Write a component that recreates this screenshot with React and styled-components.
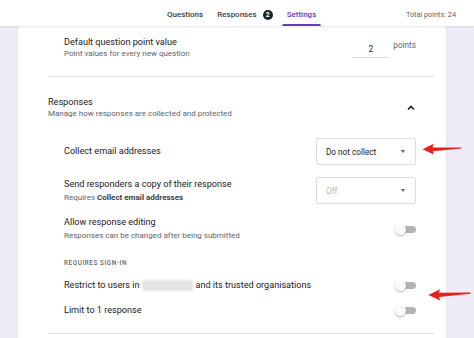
import React from "react";
import styled, { createGlobalStyle } from "styled-components";

const Global = createGlobalStyle`
  html, body { margin: 0; padding: 0; background: #f0ebf8; }
  body { font-family: Roboto, "Noto Sans", Arial, sans-serif; color: #202124; overflow: hidden; }
  * { box-sizing: border-box; }
`;

const Page = styled.div`
  position: relative;
  width: 474px;
  height: 338px;
  overflow: hidden;
  background: #f0ebf8;
`;

const Header = styled.header`
  position: relative;
  z-index: 2;
  height: 26px;
  background: #fff;
  display: flex;
  align-items: stretch;
  padding-left: 162px;
  padding-right: 18px;
  box-shadow: 0 1px 2px rgba(60, 64, 67, 0.12);
`;

const Tabs = styled.nav`
  display: flex;
  gap: 4px;
`;

const Tab = styled.div`
  position: relative;
  display: flex;
  align-items: center;
  gap: 6px;
  padding: 3px 5px 0;
  font-size: 8px;
  font-weight: 500;
  color: ${(p) => (p.$active ? "#673ab7" : "#3c4043")};
  &::after {
    content: "";
    position: absolute;
    left: 0;
    right: 0;
    bottom: 0;
    height: 2px;
    border-radius: 2px 2px 0 0;
    background: ${(p) => (p.$active ? "#673ab7" : "transparent")};
  }
`;

const Badge = styled.span`
  display: inline-flex;
  align-items: center;
  justify-content: center;
  width: 10px;
  height: 10px;
  border-radius: 50%;
  background: #202124;
  color: #fff;
  font-size: 7px;
  font-weight: 700;
`;

const Total = styled.div`
  margin-left: auto;
  display: flex;
  align-items: center;
  padding-top: 3px;
  font-size: 7.3px;
  color: #5f6368;
`;

const Main = styled.main`
  padding: 0 28px 0 18px;
`;

const Card = styled.section`
  background: #fff;
  padding: 0 12px 0 30px;
  height: 312px;
  box-shadow: 0 0 1px rgba(60, 64, 67, 0.18);
`;

const Divider = styled.hr`
  border: 0;
  height: 1px;
  background: #e0e0e0;
  margin: ${(p) => p.$mt || 0}px 0 0;
`;

const Row = styled.div`
  display: flex;
  align-items: center;
  justify-content: space-between;
  padding: 0 18px 0 ${(p) => (p.$indent ? 16 : 0)}px;
  margin-top: ${(p) => p.$mt || 0}px;
  height: ${(p) => (p.$h ? `${p.$h}px` : "auto")};
`;

const TextBlock = styled.div`
  display: flex;
  flex-direction: column;
`;

const Title = styled.div`
  font-size: ${(p) => p.$size || 9.1}px;
  line-height: ${(p) => p.$lh || 13}px;
  color: #202124;
  white-space: nowrap;
  display: flex;
  align-items: center;
`;

const Sub = styled.div`
  font-size: 8px;
  line-height: ${(p) => p.$lh || 13}px;
  color: #5f6368;
  white-space: nowrap;
  b { font-weight: 700; color: #3c4043; }
`;

const PointsWrap = styled.div`
  display: flex;
  align-items: center;
  gap: 4px;
  margin-top: -4px;
`;

const PointsInput = styled.div`
  width: 37px;
  padding-bottom: 3px;
  border-bottom: 1px solid #e0e0e0;
  text-align: center;
  font-size: 8.4px;
  color: #202124;
  margin-top: 10px;
`;

const PointsLabel = styled.span`
  font-size: 8.2px;
  color: #5f6368;
  margin-top: -2px;
`;

const Select = styled.div`
  width: 100px;
  height: 27px;
  border: 1px solid #dadce0;
  border-radius: 2px;
  display: flex;
  align-items: center;
  justify-content: space-between;
  padding: 0 10px 0 9px;
  font-size: 8.2px;
  color: ${(p) => (p.$disabled ? "#b8b8b8" : "#202124")};
`;

const Caret = styled.span`
  width: 0;
  height: 0;
  border-left: 2.5px solid transparent;
  border-right: 2.5px solid transparent;
  border-top: 3px solid #5f6368;
`;

const Toggle = styled.span`
  position: relative;
  width: 21px;
  height: 11px;
  flex: none;
  &::before {
    content: "";
    position: absolute;
    right: 0;
    top: 2px;
    width: 17px;
    height: 7px;
    border-radius: 4px;
    background: #b4b4b4;
  }
  &::after {
    content: "";
    position: absolute;
    left: 0;
    top: 0;
    width: 11px;
    height: 11px;
    border-radius: 50%;
    background: #fafafa;
    box-shadow: 0 1px 2px rgba(0, 0, 0, 0.3);
  }
`;

const Label = styled.div`
  padding-left: 16px;
  margin-top: ${(p) => p.$mt || 0}px;
  font-size: 6.3px;
  line-height: 12px;
  letter-spacing: 0.6px;
  font-weight: 500;
  color: #5f6368;
`;

const Blur = styled.span`
  display: inline-block;
  width: 51px;
  height: 11px;
  margin: 0 3px 0 2px;
  border-radius: 3px;
  background: #e4e4e4;
  filter: blur(1.2px);
`;

const Overlay = styled.svg`
  position: absolute;
  left: 0;
  top: 0;
  pointer-events: none;
  z-index: 5;
`;

function Chevron() {
  return (
    <svg width="10" height="10" viewBox="0 0 10 10">
      <path d="M2 6.5 L5 3.5 L8 6.5" fill="none" stroke="#202124" strokeWidth="1.6" />
    </svg>
  );
}

export default function App() {
  return (
    <>
      <Global />
      <Page>
        <Header>
          <Tabs>
            <Tab>Questions</Tab>
            <Tab>
              Responses <Badge>2</Badge>
            </Tab>
            <Tab $active>Settings</Tab>
          </Tabs>
          <Total>Total points: 24</Total>
        </Header>
        <Main>
          <Card>
            <Row $indent style={{ paddingTop: 10 }}>
              <TextBlock>
                <Title $lh={12}>Default question point value</Title>
                <Sub $lh={12}>Point values for every new question</Sub>
              </TextBlock>
              <PointsWrap>
                <PointsInput>2</PointsInput>
                <PointsLabel>points</PointsLabel>
              </PointsWrap>
            </Row>
            <Divider $mt={16} />
            <Row $mt={19}>
              <TextBlock>
                <Title $lh={12}>Responses</Title>
                <Sub $lh={12}>Manage how responses are collected and protected</Sub>
              </TextBlock>
              <Chevron />
            </Row>
            <Row $indent $mt={18}>
              <Title>Collect email addresses</Title>
              <Select>
                Do not collect
                <Caret />
              </Select>
            </Row>
            <Row $indent $mt={12}>
              <TextBlock>
                <Title>Send responders a copy of their response</Title>
                <Sub>
                  Requires <b>Collect email addresses</b>
                </Sub>
              </TextBlock>
              <Select $disabled>
                Off
                <Caret />
              </Select>
            </Row>
            <Row $indent $mt={12}>
              <TextBlock>
                <Title>Allow response editing</Title>
                <Sub>Responses can be changed after being submitted</Sub>
              </TextBlock>
              <Toggle />
            </Row>
            <Label $mt={15}>REQUIRES SIGN-IN</Label>
            <Row $indent $mt={6} $h={20}>
              <Title>
                Restrict to users in <Blur /> and its trusted organisations
              </Title>
              <Toggle />
            </Row>
            <Row $indent $mt={5} $h={20}>
              <Title>Limit to 1 response</Title>
              <Toggle />
            </Row>
            <Divider $mt={13} />
          </Card>
        </Main>
        <Overlay width="474" height="338" viewBox="0 0 474 338">
          <path d="M422.5 149.3 L433.5 143.8 L432.5 147.4 L461.5 147.6 L461.5 148.6 L432.8 151.2 L433.8 154.6 Z" fill="#e5221b" />
          <path d="M428.3 295 L440 289.3 L438.8 292.8 L470.5 292.6 L470.5 293.8 L439 297 L440.3 300.4 Z" fill="#e5221b" />
        </Overlay>
      </Page>
    </>
  );
}
